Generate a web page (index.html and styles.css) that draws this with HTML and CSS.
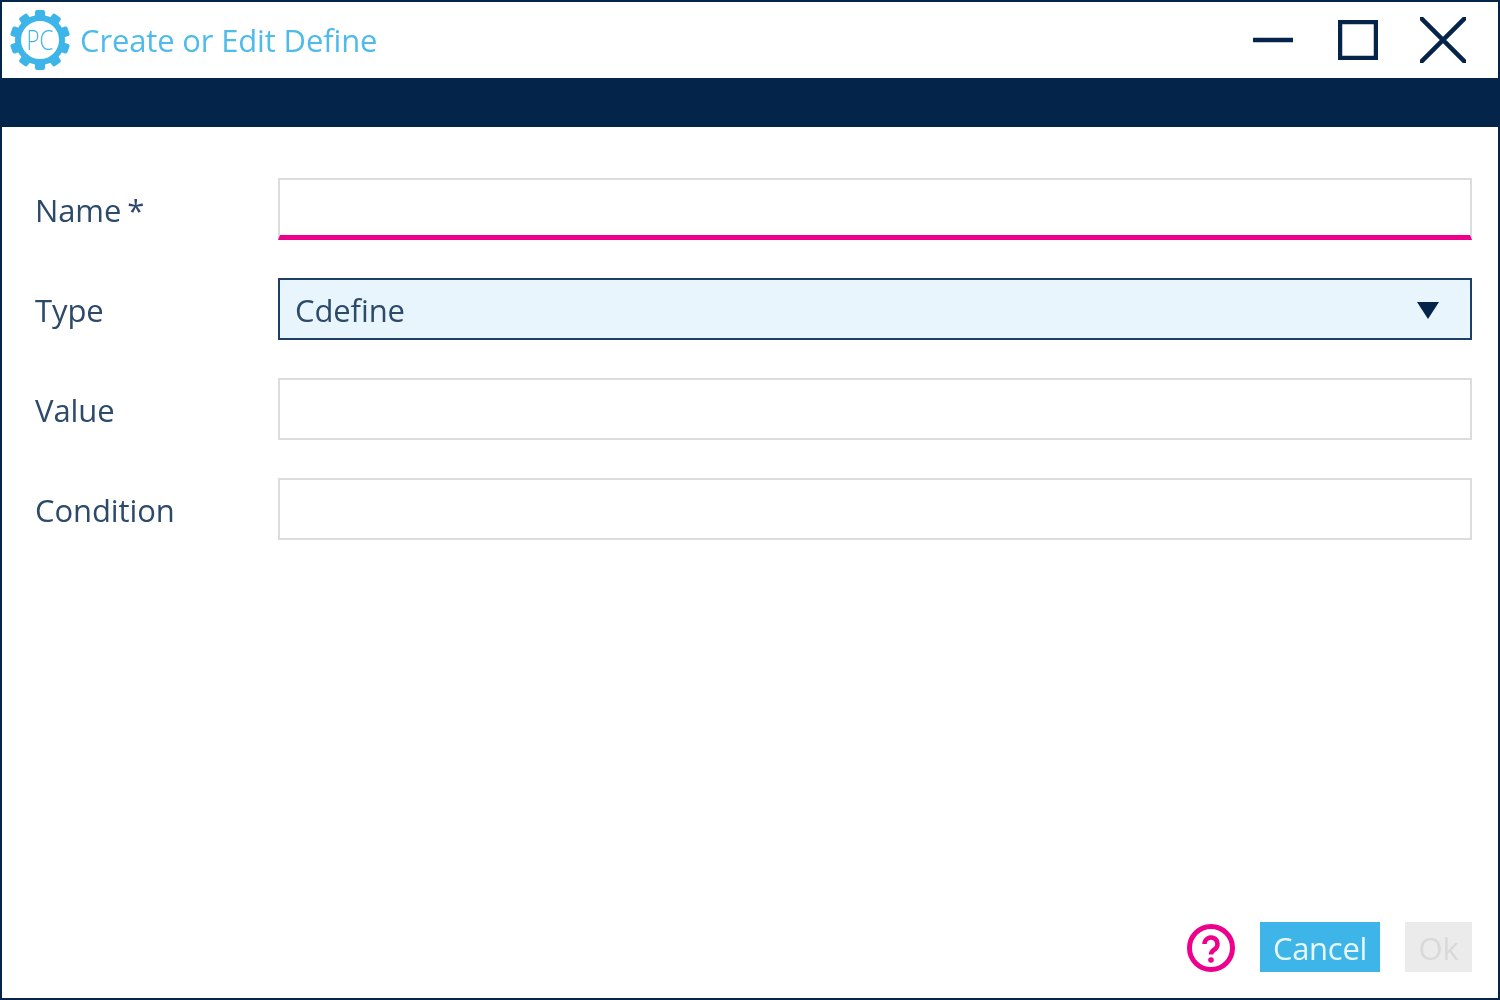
FILE: index.html
```html
<!DOCTYPE html>
<html lang="en">
<head>
<meta charset="utf-8">
<title>Create or Edit Define</title>
<link rel="stylesheet" href="styles.css">
</head>
<body>
<div class="window">
  <header class="titlebar">
    <svg class="logo" viewBox="0 0 60 60" aria-hidden="true">
      <g fill="#3db5e8">
        <rect x="25" y="0" width="10" height="10" rx="2"/>
        <rect x="25" y="0" width="10" height="10" rx="2" transform="rotate(36 30 30)"/>
        <rect x="25" y="0" width="10" height="10" rx="2" transform="rotate(72 30 30)"/>
        <rect x="25" y="0" width="10" height="10" rx="2" transform="rotate(108 30 30)"/>
        <rect x="25" y="0" width="10" height="10" rx="2" transform="rotate(144 30 30)"/>
        <rect x="25" y="0" width="10" height="10" rx="2" transform="rotate(180 30 30)"/>
        <rect x="25" y="0" width="10" height="10" rx="2" transform="rotate(216 30 30)"/>
        <rect x="25" y="0" width="10" height="10" rx="2" transform="rotate(252 30 30)"/>
        <rect x="25" y="0" width="10" height="10" rx="2" transform="rotate(288 30 30)"/>
        <rect x="25" y="0" width="10" height="10" rx="2" transform="rotate(324 30 30)"/>
      </g>
      <circle cx="30" cy="30" r="22" fill="#fff" stroke="#3db5e8" stroke-width="6"/>
      <text x="30" y="40" text-anchor="middle" textLength="27" lengthAdjust="spacingAndGlyphs" class="logo-text">PC</text>
    </svg>
    <h1 class="title">Create or Edit Define</h1>
    <div class="controls">
      <svg class="ctl ctl-min" viewBox="0 0 40 40" aria-hidden="true"><path d="M0 20H40"/></svg>
      <svg class="ctl ctl-max" viewBox="0 0 40 40" aria-hidden="true"><rect x="2" y="2" width="36" height="36"/></svg>
      <svg class="ctl ctl-close" viewBox="0 0 46 46" aria-hidden="true"><path d="M1 1L45 45M45 1L1 45"/></svg>
    </div>
  </header>
  <div class="band"></div>
  <main class="content">
    <form class="form">
      <div class="row"><label class="label label-required">Name *</label><div class="field field-error"></div></div>
      <div class="row"><label class="label">Type</label>
        <div class="field field-select"><span>Cdefine</span><svg class="caret" viewBox="0 0 22 17" aria-hidden="true"><path d="M0 0H22L11 17Z"/></svg></div>
      </div>
      <div class="row"><label class="label">Value</label><div class="field"></div></div>
      <div class="row"><label class="label">Condition</label><div class="field"></div></div>
    </form>
    <footer class="footer">
      <svg class="help" viewBox="0 0 48 48" aria-hidden="true">
        <circle cx="24" cy="24" r="21.500" fill="none" stroke="#ec008c" stroke-width="5"/>
        <path d="M17.500 20a6.500 6.500 0 1 1 10 5.500c-2.500 1.600-3.500 2.500-3.500 5" fill="none" stroke="#ec008c" stroke-width="4.500"/>
        <circle cx="24" cy="36" r="2.800" fill="#ec008c"/>
      </svg>
      <button class="btn btn-cancel" type="button">Cancel</button>
      <button class="btn btn-ok" type="button" disabled>Ok</button>
    </footer>
  </main>
</div>
</body>
</html>
```
FILE: styles.css
```css
* { box-sizing: border-box; }
html, body { margin: 0; height: 100%; overflow: hidden; }
body { font-family: "Open Sans", "Noto Sans", "Liberation Sans", sans-serif; background: #fff; }
.window { width: 1500px; height: 1000px; border: 2px solid #04244a; display: flex; flex-direction: column; background: #fff; overflow: hidden; filter: blur(0.6px); }
.titlebar { height: 76px; flex: none; display: flex; align-items: center; padding: 0 32px 0 8px; }
.logo { width: 60px; height: 60px; flex: none; }
.logo-text { font-family: "Open Sans", sans-serif; font-size: 28px; fill: #3db5e8; font-weight: 300; }
.title { margin: 0 0 0 10px; font-size: 31px; font-weight: 400; color: #4fbbea; letter-spacing: -0.15px; }
.controls { margin-left: auto; display: flex; align-items: center; gap: 40px; }
.ctl { fill: none; stroke: #04244a; display: block; }
.ctl-min { width: 40px; height: 40px; stroke-width: 4.5px; margin-right: 5px; }
.ctl-max { width: 40px; height: 40px; stroke-width: 4.5px; }
.ctl-close { width: 46px; height: 46px; stroke-width: 4.5px; stroke-linecap: round; margin-left: 2px; }
.band { height: 49px; flex: none; background: #04244a; }
.content { flex: 1; display: flex; flex-direction: column; padding: 51px 26px 26px 33px; }
.form { display: flex; flex-direction: column; gap: 38px; }
.row { display: flex; align-items: center; height: 62px; }
.label { width: 243px; flex: none; font-size: 31px; color: #2d4a6b; letter-spacing: -0.1px; position: relative; top: 1px; }
.label-required { word-spacing: -2px; }
.field { flex: 1; height: 62px; border: 2px solid #dcdcdc; background: #fff; }
.field-error { border-bottom: 5px solid #ec008c; }
.field-select { border: 2px solid #1d3e66; background: #e8f5fc; display: flex; align-items: center; justify-content: space-between; padding: 2px 31px 0 15px; font-size: 31px; color: #2d4a6b; letter-spacing: -0.1px; }
.caret { width: 22px; height: 17px; fill: #04244a; display: block; margin-top: 1px; }
.footer { margin-top: auto; display: flex; align-items: center; justify-content: flex-end; gap: 25px; }
.help { width: 48px; height: 48px; flex: none; margin-top: 2px; }
.btn { height: 50px; border: 0; padding: 1px 0 0; font-family: inherit; font-size: 31px; letter-spacing: -0.3px; }
.btn-cancel { width: 120px; background: #3db5e8; color: #e8f7fd; }
.btn-ok { width: 67px; background: #ebebeb; color: #d9d9d9; }
```
